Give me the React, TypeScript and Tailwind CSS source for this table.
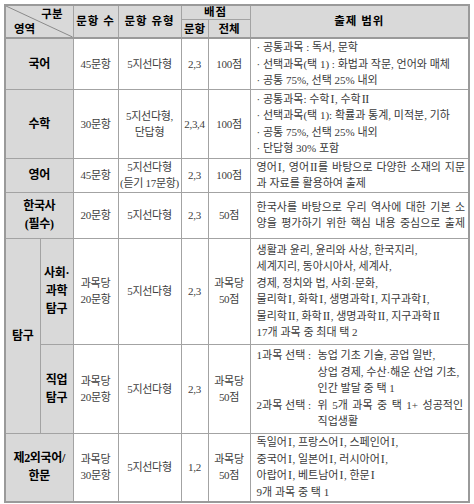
import React from 'react';

const font = "font-['Liberation_Serif','Noto_Sans_CJK_KR',serif]";

const th = 'border border-[#a3a3a3] bg-[#d9d9d9] font-bold text-black text-center align-middle p-0 text-[11.5px]';
const area = 'border border-[#a3a3a3] bg-[#d9d9d9] font-bold text-black text-center align-middle p-0 text-[12px] leading-[18px] tracking-[-0.3px]';
const td = 'border border-[#a3a3a3] text-center align-middle p-0 text-[#404040] text-[11px] leading-[16px] tracking-[-0.3px] whitespace-nowrap';
const range = 'border border-[#a3a3a3] align-middle py-0 pl-[6px] pr-[3px] text-[#3a3a3a] text-[11px] leading-[16.5px] tracking-[0px] text-left whitespace-nowrap';

const J = ({ children }: { children: React.ReactNode }) => (
  <div className="text-justify [text-align-last:justify] whitespace-normal">{children}</div>
);

// roman numerals drawn with the serif latin letter, as in the source table
const R = ({ n }: { n: 1 | 2 }) => (
  <span className="font-['Liberation_Serif',serif] text-[12px] mx-[1px] tracking-[-0.5px]">{n === 1 ? 'I' : 'II'}</span>
);

export default function App() {
  return (
    <div className={`bg-white w-[474px] h-[504px] pt-[4px] pl-[4px] ${font}`}>
      <table className="table-fixed border-collapse border-2 border-[#9a9a9a] w-[464px]">
        <colgroup>
          <col className="w-[35px]" />
          <col className="w-[33px]" />
          <col className="w-[45px]" />
          <col className="w-[63px]" />
          <col className="w-[27px]" />
          <col className="w-[42px]" />
          <col className="w-[219px]" />
        </colgroup>
        <thead>
          <tr className="h-[13px]">
            <th colSpan={2} rowSpan={2} className={`${th} relative`}>
              <svg className="absolute inset-0 w-full h-full" preserveAspectRatio="none" viewBox="0 0 100 100">
                <line x1="0" y1="0" x2="100" y2="100" stroke="#8a8a8a" strokeWidth="1" vectorEffect="non-scaling-stroke" />
              </svg>
              <div className="relative flex flex-col leading-[14px] h-[31px]">
                <span className="self-end pr-[10px] pt-[1px]">구분</span>
                <span className="self-start pl-[8px] mt-auto pb-[1px]">영역</span>
              </div>
            </th>
            <th rowSpan={2} className={`${th} tracking-[1px]`}>문항 수</th>
            <th rowSpan={2} className={`${th} tracking-[1px]`}>문항 유형</th>
            <th colSpan={2} className={`${th} leading-[13px] tracking-[1px]`}>배점</th>
            <th rowSpan={2} className={`${th} tracking-[1px]`}>출제 범위</th>
          </tr>
          <tr className="h-[18px] border-b-2 border-[#9a9a9a]">
            <th className={`${th} leading-[14px]`}>문항</th>
            <th className={`${th} leading-[14px]`}>전체</th>
          </tr>
        </thead>
        <tbody>
          <tr className="h-[51px]">
            <td colSpan={2} className={area}>국어</td>
            <td className={td}>45문항</td>
            <td className={td}>5지선다형</td>
            <td className={td}>2,3</td>
            <td className={td}>100점</td>
            <td className={range}>
              <div>· 공통과목 : 독서, 문학</div>
              <div>· 선택과목(택 1) : 화법과 작문, 언어와 매체</div>
              <div>· 공통 75%, 선택 25% 내외</div>
            </td>
          </tr>
          <tr className="h-[69px]">
            <td colSpan={2} className={area}>수학</td>
            <td className={td}>30문항</td>
            <td className={td}>5지선다형,<br />단답형</td>
            <td className={td}>2,3,4</td>
            <td className={td}>100점</td>
            <td className={range}>
              <div>· 공통과목: 수학<R n={1} />, 수학<R n={2} /></div>
              <div>· 선택과목(택 1): 확률과 통계, 미적분, 기하</div>
              <div>· 공통 75%, 선택 25% 내외</div>
              <div>· 단답형 30% 포함</div>
            </td>
          </tr>
          <tr className="h-[30px]">
            <td colSpan={2} className={area}>영어</td>
            <td className={td}>45문항</td>
            <td className={`${td} leading-[14px]`}>5지선다형<br />(듣기 17문항)</td>
            <td className={td}>2,3</td>
            <td className={td}>100점</td>
            <td className={`${range} leading-[15px]`}>
              <J>영어<R n={1} />, 영어<R n={2} />를 바탕으로 다양한 소재의 지문</J>
              <div>과 자료를 활용하여 출제</div>
            </td>
          </tr>
          <tr className="h-[46px]">
            <td colSpan={2} className={area}>한국사<br />(필수)</td>
            <td className={td}>20문항</td>
            <td className={td}>5지선다형</td>
            <td className={td}>2,3</td>
            <td className={td}>50점</td>
            <td className={range}>
              <J>한국사를 바탕으로 우리 역사에 대한 기본 소</J>
              <J>양을 평가하기 위한 핵심 내용 중심으로 출제</J>
            </td>
          </tr>
          <tr className="h-[106px]">
            <td rowSpan={2} className={area}>탐구</td>
            <td className={area}>사회·<br />과학<br />탐구</td>
            <td className={td}>과목당<br />20문항</td>
            <td className={td}>5지선다형</td>
            <td className={td}>2,3</td>
            <td className={td}>과목당<br />50점</td>
            <td className={range}>
              <div>생활과 윤리, 윤리와 사상, 한국지리,</div>
              <div>세계지리, 동아시아사, 세계사,</div>
              <div>경제, 정치와 법, 사회·문화,</div>
              <div>물리학<R n={1} />, 화학<R n={1} />, 생명과학<R n={1} />, 지구과학<R n={1} />,</div>
              <div>물리학<R n={2} />, 화학<R n={2} />, 생명과학<R n={2} />, 지구과학<R n={2} /></div>
              <div>17개 과목 중 최대 택 2</div>
            </td>
          </tr>
          <tr className="h-[89px]">
            <td className={area}>직업<br />탐구</td>
            <td className={td}>과목당<br />20문항</td>
            <td className={td}>5지선다형</td>
            <td className={td}>2,3</td>
            <td className={td}>과목당<br />50점</td>
            <td className={`${range} pr-[1px]`}>
              <div className="flex">
                <span className="shrink-0 w-[61px]">1과목 선택 :</span>
                <div className="flex flex-col">
                  <span>농업 기초 기술, 공업 일반,</span>
                  <span>상업 경제, 수산·해운 산업 기초,</span>
                  <span>인간 발달 중 택 1</span>
                </div>
              </div>
              <div className="flex">
                <span className="shrink-0 w-[61px]">2과목 선택 :</span>
                <div className="flex flex-col grow pr-[2px]">
                  <J>위 5개 과목 중 택 1+ 성공적인</J>
                  <span>직업생활</span>
                </div>
              </div>
            </td>
          </tr>
          <tr className="h-[69px]">
            <td colSpan={2} className={area}>제2외국어/<br />한문</td>
            <td className={td}>과목당<br />30문항</td>
            <td className={td}>5지선다형</td>
            <td className={td}>1,2</td>
            <td className={td}>과목당<br />50점</td>
            <td className={range}>
              <div>독일어<R n={1} />, 프랑스어<R n={1} />, 스페인어<R n={1} />,</div>
              <div>중국어<R n={1} />, 일본어<R n={1} />, 러시아어<R n={1} />,</div>
              <div>아랍어<R n={1} />, 베트남어<R n={1} />, 한문<R n={1} /></div>
              <div>9개 과목 중 택 1</div>
            </td>
          </tr>
        </tbody>
      </table>
    </div>
  );
}
